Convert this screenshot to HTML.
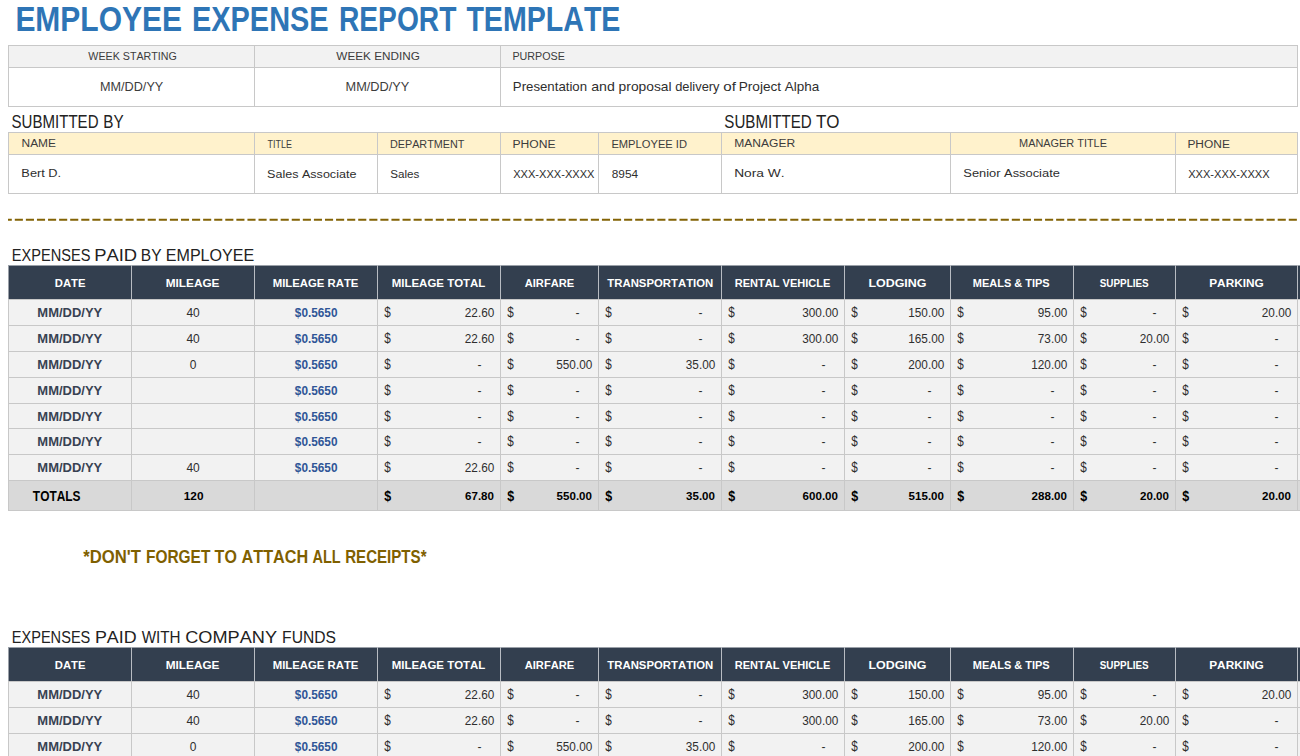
<!DOCTYPE html>
<html><head><meta charset="utf-8"><style>
html,body{margin:0;padding:0;background:#fff;}
body{width:1300px;height:756px;overflow:hidden;}
svg{display:block;font-family:"Liberation Sans",sans-serif;font-kerning:none;}
</style></head><body>
<svg width="1300" height="756" viewBox="0 0 1300 756">
<rect width="1300" height="756" fill="#fff"/>
<text x="15.39" y="31.2" font-size="34.4" font-weight="bold" fill="#2E75B6" textLength="166.58" lengthAdjust="spacingAndGlyphs">EMPLOYEE</text>
<text x="191.96" y="31.2" font-size="34.4" font-weight="bold" fill="#2E75B6" textLength="136.67" lengthAdjust="spacingAndGlyphs">EXPENSE</text>
<text x="338.91" y="31.2" font-size="34.4" font-weight="bold" fill="#2E75B6" textLength="117.49" lengthAdjust="spacingAndGlyphs">REPORT</text>
<text x="466.38" y="31.2" font-size="34.4" font-weight="bold" fill="#2E75B6" textLength="154.04" lengthAdjust="spacingAndGlyphs">TEMPLATE</text>
<rect x="8" y="45" width="1290" height="22" fill="#F2F2F2"/>
<rect x="8" y="45" width="1290" height="1" fill="#C8C8C8"/>
<rect x="8" y="67" width="1290" height="1" fill="#C8C8C8"/>
<rect x="8" y="106" width="1290" height="1" fill="#C8C8C8"/>
<rect x="8" y="45" width="1" height="62" fill="#C8C8C8"/>
<rect x="254" y="45" width="1" height="62" fill="#C8C8C8"/>
<rect x="500" y="45" width="1" height="62" fill="#C8C8C8"/>
<rect x="1297" y="45" width="1" height="62" fill="#C8C8C8"/>
<text x="88.35" y="60" font-size="11.7" fill="#3C3C3C" textLength="88.45" lengthAdjust="spacingAndGlyphs">WEEK STARTING</text>
<text x="336.35" y="60" font-size="11.7" fill="#3C3C3C" textLength="83.53" lengthAdjust="spacingAndGlyphs">WEEK ENDING</text>
<text x="512.42" y="60" font-size="11.7" fill="#3C3C3C" textLength="52.54" lengthAdjust="spacingAndGlyphs">PURPOSE</text>
<text x="99.96" y="91" font-size="12.1" fill="#3C3C3C" textLength="63.32" lengthAdjust="spacingAndGlyphs">MM/DD/YY</text>
<text x="345.55" y="91" font-size="12.1" fill="#3C3C3C" textLength="63.73" lengthAdjust="spacingAndGlyphs">MM/DD/YY</text>
<text x="512.82" y="90.5" font-size="11.9" fill="#2E2E2E" textLength="74.24" lengthAdjust="spacingAndGlyphs">Presentation</text>
<text x="591.20" y="90.5" font-size="11.9" fill="#2E2E2E" textLength="23.61" lengthAdjust="spacingAndGlyphs">and</text>
<text x="618.61" y="90.5" font-size="11.9" fill="#2E2E2E" textLength="53.02" lengthAdjust="spacingAndGlyphs">proposal</text>
<text x="675.16" y="90.5" font-size="11.9" fill="#2E2E2E" textLength="44.37" lengthAdjust="spacingAndGlyphs">delivery</text>
<text x="723.36" y="90.5" font-size="11.9" fill="#2E2E2E" textLength="12.61" lengthAdjust="spacingAndGlyphs">of</text>
<text x="738.68" y="90.5" font-size="11.9" fill="#2E2E2E" textLength="42.42" lengthAdjust="spacingAndGlyphs">Project</text>
<text x="784.87" y="90.5" font-size="11.9" fill="#2E2E2E" textLength="34.43" lengthAdjust="spacingAndGlyphs">Alpha</text>
<text x="11.52" y="128" font-size="17.5" fill="#222222" textLength="87.00" lengthAdjust="spacingAndGlyphs">SUBMITTED</text>
<text x="103.35" y="128" font-size="17.5" fill="#222222" textLength="20.39" lengthAdjust="spacingAndGlyphs">BY</text>
<text x="724.31" y="128" font-size="17.5" fill="#222222" textLength="87.41" lengthAdjust="spacingAndGlyphs">SUBMITTED</text>
<text x="815.92" y="128" font-size="17.5" fill="#222222" textLength="23.59" lengthAdjust="spacingAndGlyphs">TO</text>
<rect x="8" y="132" width="1290" height="22" fill="#FFF2CC"/>
<rect x="8" y="132" width="1290" height="1" fill="#C8C8C8"/>
<rect x="8" y="154" width="1290" height="1" fill="#C8C8C8"/>
<rect x="8" y="193" width="1290" height="1" fill="#C8C8C8"/>
<rect x="8" y="132" width="1" height="62" fill="#C8C8C8"/>
<rect x="254" y="132" width="1" height="62" fill="#C8C8C8"/>
<rect x="377" y="132" width="1" height="62" fill="#C8C8C8"/>
<rect x="500" y="132" width="1" height="62" fill="#C8C8C8"/>
<rect x="598" y="132" width="1" height="62" fill="#C8C8C8"/>
<rect x="721" y="132" width="1" height="62" fill="#C8C8C8"/>
<rect x="950" y="132" width="1" height="62" fill="#C8C8C8"/>
<rect x="1175" y="132" width="1" height="62" fill="#C8C8C8"/>
<rect x="1297" y="132" width="1" height="62" fill="#C8C8C8"/>
<text x="21.52" y="147" font-size="11.7" fill="#3C3C3C" textLength="34.49" lengthAdjust="spacingAndGlyphs">NAME</text>
<text x="267.60" y="147.8" font-size="11.7" fill="#3C3C3C" textLength="24.28" lengthAdjust="spacingAndGlyphs">TITLE</text>
<text x="389.91" y="147.5" font-size="11.7" fill="#3C3C3C" textLength="74.54" lengthAdjust="spacingAndGlyphs">DEPARTMENT</text>
<text x="512.41" y="147.5" font-size="11.7" fill="#3C3C3C" textLength="43.12" lengthAdjust="spacingAndGlyphs">PHONE</text>
<text x="611.38" y="147.5" font-size="11.7" fill="#3C3C3C" textLength="75.65" lengthAdjust="spacingAndGlyphs">EMPLOYEE ID</text>
<text x="734.31" y="146.9" font-size="11.7" fill="#3C3C3C" textLength="60.95" lengthAdjust="spacingAndGlyphs">MANAGER</text>
<text x="1019.11" y="146.9" font-size="11.7" fill="#3C3C3C" textLength="87.86" lengthAdjust="spacingAndGlyphs">MANAGER TITLE</text>
<text x="1187.42" y="147.8" font-size="11.7" fill="#3C3C3C" textLength="42.49" lengthAdjust="spacingAndGlyphs">PHONE</text>
<text x="21.35" y="177.2" font-size="11.7" fill="#2E2E2E" textLength="39.82" lengthAdjust="spacingAndGlyphs">Bert D.</text>
<text x="267.13" y="177.9" font-size="11.7" fill="#2E2E2E" textLength="89.23" lengthAdjust="spacingAndGlyphs">Sales Associate</text>
<text x="390.27" y="178.2" font-size="11.7" fill="#2E2E2E" textLength="29.15" lengthAdjust="spacingAndGlyphs">Sales</text>
<text x="513.15" y="178.2" font-size="11.5" fill="#2E2E2E" textLength="81.38" lengthAdjust="spacingAndGlyphs">XXX-XXX-XXXX</text>
<text x="611.79" y="178.2" font-size="11.7" fill="#2E2E2E" textLength="26.36" lengthAdjust="spacingAndGlyphs">8954</text>
<text x="734.17" y="177" font-size="11.7" fill="#2E2E2E" textLength="50.49" lengthAdjust="spacingAndGlyphs">Nora W.</text>
<text x="963.32" y="177" font-size="11.7" fill="#2E2E2E" textLength="96.56" lengthAdjust="spacingAndGlyphs">Senior Associate</text>
<text x="1188.15" y="178" font-size="11.5" fill="#2E2E2E" textLength="81.48" lengthAdjust="spacingAndGlyphs">XXX-XXX-XXXX</text>
<path d="M8 219.8H1297" stroke="#836305" stroke-width="2.1" stroke-dasharray="8.1 2.978" stroke-dashoffset="4.28"/>
<text x="11.80" y="261" font-size="17.2" fill="#222222" textLength="78.67" lengthAdjust="spacingAndGlyphs">EXPENSES</text>
<text x="94.19" y="261" font-size="17.2" fill="#222222" textLength="42.89" lengthAdjust="spacingAndGlyphs">PAID</text>
<text x="140.83" y="261" font-size="17.2" fill="#222222" textLength="20.72" lengthAdjust="spacingAndGlyphs">BY</text>
<text x="165.78" y="261" font-size="17.2" fill="#222222" textLength="88.51" lengthAdjust="spacingAndGlyphs">EMPLOYEE</text>
<rect x="8" y="265" width="1292" height="34" fill="#9AA0A8"/>
<rect x="9" y="266" width="1291" height="33" fill="#333F4F"/>
<text x="54.75" y="286.7" font-size="11.2" font-weight="bold" fill="#FFFFFF" textLength="30.69" lengthAdjust="spacingAndGlyphs">DATE</text>
<text x="165.71" y="286.7" font-size="11.2" font-weight="bold" fill="#FFFFFF" textLength="53.75" lengthAdjust="spacingAndGlyphs">MILEAGE</text>
<text x="272.74" y="286.7" font-size="11.2" font-weight="bold" fill="#FFFFFF" textLength="85.70" lengthAdjust="spacingAndGlyphs">MILEAGE RATE</text>
<text x="391.73" y="286.7" font-size="11.2" font-weight="bold" fill="#FFFFFF" textLength="93.62" lengthAdjust="spacingAndGlyphs">MILEAGE TOTAL</text>
<text x="524.72" y="286.7" font-size="11.2" font-weight="bold" fill="#FFFFFF" textLength="49.46" lengthAdjust="spacingAndGlyphs">AIRFARE</text>
<text x="607.37" y="286.7" font-size="11.2" font-weight="bold" fill="#FFFFFF" textLength="105.89" lengthAdjust="spacingAndGlyphs">TRANSPORTATION</text>
<text x="734.76" y="286.7" font-size="11.2" font-weight="bold" fill="#FFFFFF" textLength="95.67" lengthAdjust="spacingAndGlyphs">RENTAL VEHICLE</text>
<text x="868.42" y="286.7" font-size="11.2" font-weight="bold" fill="#FFFFFF" textLength="58.11" lengthAdjust="spacingAndGlyphs">LODGING</text>
<text x="972.76" y="286.7" font-size="11.2" font-weight="bold" fill="#FFFFFF" textLength="76.96" lengthAdjust="spacingAndGlyphs">MEALS &amp; TIPS</text>
<text x="1099.72" y="286.7" font-size="11.2" font-weight="bold" fill="#FFFFFF" textLength="48.92" lengthAdjust="spacingAndGlyphs">SUPPLIES</text>
<text x="1209.21" y="286.7" font-size="11.2" font-weight="bold" fill="#FFFFFF" textLength="54.52" lengthAdjust="spacingAndGlyphs">PARKING</text>
<rect x="131" y="265" width="1" height="34" fill="#B8BCC2"/>
<rect x="254" y="265" width="1" height="34" fill="#B8BCC2"/>
<rect x="377" y="265" width="1" height="34" fill="#B8BCC2"/>
<rect x="500" y="265" width="1" height="34" fill="#B8BCC2"/>
<rect x="598" y="265" width="1" height="34" fill="#B8BCC2"/>
<rect x="721" y="265" width="1" height="34" fill="#B8BCC2"/>
<rect x="844" y="265" width="1" height="34" fill="#B8BCC2"/>
<rect x="950" y="265" width="1" height="34" fill="#B8BCC2"/>
<rect x="1073" y="265" width="1" height="34" fill="#B8BCC2"/>
<rect x="1175" y="265" width="1" height="34" fill="#B8BCC2"/>
<rect x="1297" y="265" width="1" height="34" fill="#B8BCC2"/>
<rect x="8" y="299" width="1292" height="211" fill="#F2F2F2"/>
<rect x="8" y="481" width="1292" height="29" fill="#D9D9D9"/>
<rect x="8" y="299" width="1292" height="1" fill="#C8C8C8"/>
<rect x="8" y="325" width="1292" height="1" fill="#C8C8C8"/>
<rect x="8" y="351" width="1292" height="1" fill="#C8C8C8"/>
<rect x="8" y="377" width="1292" height="1" fill="#C8C8C8"/>
<rect x="8" y="403" width="1292" height="1" fill="#C8C8C8"/>
<rect x="8" y="428" width="1292" height="1" fill="#C8C8C8"/>
<rect x="8" y="454" width="1292" height="1" fill="#C8C8C8"/>
<rect x="8" y="480" width="1292" height="1" fill="#C8C8C8"/>
<rect x="8" y="510" width="1292" height="1" fill="#C8C8C8"/>
<rect x="8" y="299" width="1" height="212" fill="#C8C8C8"/>
<rect x="131" y="299" width="1" height="212" fill="#C8C8C8"/>
<rect x="254" y="299" width="1" height="212" fill="#C8C8C8"/>
<rect x="377" y="299" width="1" height="212" fill="#C8C8C8"/>
<rect x="500" y="299" width="1" height="212" fill="#C8C8C8"/>
<rect x="598" y="299" width="1" height="212" fill="#C8C8C8"/>
<rect x="721" y="299" width="1" height="212" fill="#C8C8C8"/>
<rect x="844" y="299" width="1" height="212" fill="#C8C8C8"/>
<rect x="950" y="299" width="1" height="212" fill="#C8C8C8"/>
<rect x="1073" y="299" width="1" height="212" fill="#C8C8C8"/>
<rect x="1175" y="299" width="1" height="212" fill="#C8C8C8"/>
<rect x="1297" y="299" width="1" height="212" fill="#C8C8C8"/>
<text x="37.33" y="316.7" font-size="11.9" font-weight="bold" fill="#384252" textLength="64.88" lengthAdjust="spacingAndGlyphs">MM/DD/YY</text>
<text x="186.42" y="316.7" font-size="12" fill="#2E2E2E" textLength="13.35" lengthAdjust="spacingAndGlyphs">40</text>
<text x="294.84" y="316.7" font-size="11.9" font-weight="bold" fill="#2F5597" textLength="42.64" lengthAdjust="spacingAndGlyphs">$0.5650</text>
<text x="384.27" y="317.3" font-size="14" fill="#2E2E2E" textLength="6.51" lengthAdjust="spacingAndGlyphs">$</text>
<text x="464.83" y="316.7" font-size="12" fill="#2E2E2E" textLength="29.43" lengthAdjust="spacingAndGlyphs">22.60</text>
<text x="507.27" y="317.3" font-size="14" fill="#2E2E2E" textLength="6.51" lengthAdjust="spacingAndGlyphs">$</text>
<text x="575.54" y="316.7" font-size="12" fill="#2E2E2E" textLength="4.00" lengthAdjust="spacingAndGlyphs">-</text>
<text x="605.27" y="317.3" font-size="14" fill="#2E2E2E" textLength="6.51" lengthAdjust="spacingAndGlyphs">$</text>
<text x="698.54" y="316.7" font-size="12" fill="#2E2E2E" textLength="4.00" lengthAdjust="spacingAndGlyphs">-</text>
<text x="728.27" y="317.3" font-size="14" fill="#2E2E2E" textLength="6.51" lengthAdjust="spacingAndGlyphs">$</text>
<text x="802.29" y="316.7" font-size="12" fill="#2E2E2E" textLength="35.97" lengthAdjust="spacingAndGlyphs">300.00</text>
<text x="851.27" y="317.3" font-size="14" fill="#2E2E2E" textLength="6.51" lengthAdjust="spacingAndGlyphs">$</text>
<text x="908.29" y="316.7" font-size="12" fill="#2E2E2E" textLength="35.97" lengthAdjust="spacingAndGlyphs">150.00</text>
<text x="957.27" y="317.3" font-size="14" fill="#2E2E2E" textLength="6.51" lengthAdjust="spacingAndGlyphs">$</text>
<text x="1037.83" y="316.7" font-size="12" fill="#2E2E2E" textLength="29.43" lengthAdjust="spacingAndGlyphs">95.00</text>
<text x="1080.27" y="317.3" font-size="14" fill="#2E2E2E" textLength="6.51" lengthAdjust="spacingAndGlyphs">$</text>
<text x="1152.54" y="316.7" font-size="12" fill="#2E2E2E" textLength="4.00" lengthAdjust="spacingAndGlyphs">-</text>
<text x="1182.27" y="317.3" font-size="14" fill="#2E2E2E" textLength="6.51" lengthAdjust="spacingAndGlyphs">$</text>
<text x="1261.83" y="316.7" font-size="12" fill="#2E2E2E" textLength="29.43" lengthAdjust="spacingAndGlyphs">20.00</text>
<text x="37.33" y="342.7" font-size="11.9" font-weight="bold" fill="#384252" textLength="64.88" lengthAdjust="spacingAndGlyphs">MM/DD/YY</text>
<text x="186.42" y="342.7" font-size="12" fill="#2E2E2E" textLength="13.35" lengthAdjust="spacingAndGlyphs">40</text>
<text x="294.84" y="342.7" font-size="11.9" font-weight="bold" fill="#2F5597" textLength="42.64" lengthAdjust="spacingAndGlyphs">$0.5650</text>
<text x="384.27" y="343.3" font-size="14" fill="#2E2E2E" textLength="6.51" lengthAdjust="spacingAndGlyphs">$</text>
<text x="464.83" y="342.7" font-size="12" fill="#2E2E2E" textLength="29.43" lengthAdjust="spacingAndGlyphs">22.60</text>
<text x="507.27" y="343.3" font-size="14" fill="#2E2E2E" textLength="6.51" lengthAdjust="spacingAndGlyphs">$</text>
<text x="575.54" y="342.7" font-size="12" fill="#2E2E2E" textLength="4.00" lengthAdjust="spacingAndGlyphs">-</text>
<text x="605.27" y="343.3" font-size="14" fill="#2E2E2E" textLength="6.51" lengthAdjust="spacingAndGlyphs">$</text>
<text x="698.54" y="342.7" font-size="12" fill="#2E2E2E" textLength="4.00" lengthAdjust="spacingAndGlyphs">-</text>
<text x="728.27" y="343.3" font-size="14" fill="#2E2E2E" textLength="6.51" lengthAdjust="spacingAndGlyphs">$</text>
<text x="802.29" y="342.7" font-size="12" fill="#2E2E2E" textLength="35.97" lengthAdjust="spacingAndGlyphs">300.00</text>
<text x="851.27" y="343.3" font-size="14" fill="#2E2E2E" textLength="6.51" lengthAdjust="spacingAndGlyphs">$</text>
<text x="908.29" y="342.7" font-size="12" fill="#2E2E2E" textLength="35.97" lengthAdjust="spacingAndGlyphs">165.00</text>
<text x="957.27" y="343.3" font-size="14" fill="#2E2E2E" textLength="6.51" lengthAdjust="spacingAndGlyphs">$</text>
<text x="1037.83" y="342.7" font-size="12" fill="#2E2E2E" textLength="29.43" lengthAdjust="spacingAndGlyphs">73.00</text>
<text x="1080.27" y="343.3" font-size="14" fill="#2E2E2E" textLength="6.51" lengthAdjust="spacingAndGlyphs">$</text>
<text x="1139.83" y="342.7" font-size="12" fill="#2E2E2E" textLength="29.43" lengthAdjust="spacingAndGlyphs">20.00</text>
<text x="1182.27" y="343.3" font-size="14" fill="#2E2E2E" textLength="6.51" lengthAdjust="spacingAndGlyphs">$</text>
<text x="1274.54" y="342.7" font-size="12" fill="#2E2E2E" textLength="4.00" lengthAdjust="spacingAndGlyphs">-</text>
<text x="37.33" y="368.7" font-size="11.9" font-weight="bold" fill="#384252" textLength="64.88" lengthAdjust="spacingAndGlyphs">MM/DD/YY</text>
<text x="189.66" y="368.7" font-size="12" fill="#2E2E2E" textLength="6.67" lengthAdjust="spacingAndGlyphs">0</text>
<text x="294.84" y="368.7" font-size="11.9" font-weight="bold" fill="#2F5597" textLength="42.64" lengthAdjust="spacingAndGlyphs">$0.5650</text>
<text x="384.27" y="369.3" font-size="14" fill="#2E2E2E" textLength="6.51" lengthAdjust="spacingAndGlyphs">$</text>
<text x="477.54" y="368.7" font-size="12" fill="#2E2E2E" textLength="4.00" lengthAdjust="spacingAndGlyphs">-</text>
<text x="507.27" y="369.3" font-size="14" fill="#2E2E2E" textLength="6.51" lengthAdjust="spacingAndGlyphs">$</text>
<text x="556.29" y="368.7" font-size="12" fill="#2E2E2E" textLength="35.97" lengthAdjust="spacingAndGlyphs">550.00</text>
<text x="605.27" y="369.3" font-size="14" fill="#2E2E2E" textLength="6.51" lengthAdjust="spacingAndGlyphs">$</text>
<text x="685.83" y="368.7" font-size="12" fill="#2E2E2E" textLength="29.43" lengthAdjust="spacingAndGlyphs">35.00</text>
<text x="728.27" y="369.3" font-size="14" fill="#2E2E2E" textLength="6.51" lengthAdjust="spacingAndGlyphs">$</text>
<text x="821.54" y="368.7" font-size="12" fill="#2E2E2E" textLength="4.00" lengthAdjust="spacingAndGlyphs">-</text>
<text x="851.27" y="369.3" font-size="14" fill="#2E2E2E" textLength="6.51" lengthAdjust="spacingAndGlyphs">$</text>
<text x="908.29" y="368.7" font-size="12" fill="#2E2E2E" textLength="35.97" lengthAdjust="spacingAndGlyphs">200.00</text>
<text x="957.27" y="369.3" font-size="14" fill="#2E2E2E" textLength="6.51" lengthAdjust="spacingAndGlyphs">$</text>
<text x="1031.29" y="368.7" font-size="12" fill="#2E2E2E" textLength="35.97" lengthAdjust="spacingAndGlyphs">120.00</text>
<text x="1080.27" y="369.3" font-size="14" fill="#2E2E2E" textLength="6.51" lengthAdjust="spacingAndGlyphs">$</text>
<text x="1152.54" y="368.7" font-size="12" fill="#2E2E2E" textLength="4.00" lengthAdjust="spacingAndGlyphs">-</text>
<text x="1182.27" y="369.3" font-size="14" fill="#2E2E2E" textLength="6.51" lengthAdjust="spacingAndGlyphs">$</text>
<text x="1274.54" y="368.7" font-size="12" fill="#2E2E2E" textLength="4.00" lengthAdjust="spacingAndGlyphs">-</text>
<text x="37.33" y="394.7" font-size="11.9" font-weight="bold" fill="#384252" textLength="64.88" lengthAdjust="spacingAndGlyphs">MM/DD/YY</text>
<text x="294.84" y="394.7" font-size="11.9" font-weight="bold" fill="#2F5597" textLength="42.64" lengthAdjust="spacingAndGlyphs">$0.5650</text>
<text x="384.27" y="395.3" font-size="14" fill="#2E2E2E" textLength="6.51" lengthAdjust="spacingAndGlyphs">$</text>
<text x="477.54" y="394.7" font-size="12" fill="#2E2E2E" textLength="4.00" lengthAdjust="spacingAndGlyphs">-</text>
<text x="507.27" y="395.3" font-size="14" fill="#2E2E2E" textLength="6.51" lengthAdjust="spacingAndGlyphs">$</text>
<text x="575.54" y="394.7" font-size="12" fill="#2E2E2E" textLength="4.00" lengthAdjust="spacingAndGlyphs">-</text>
<text x="605.27" y="395.3" font-size="14" fill="#2E2E2E" textLength="6.51" lengthAdjust="spacingAndGlyphs">$</text>
<text x="698.54" y="394.7" font-size="12" fill="#2E2E2E" textLength="4.00" lengthAdjust="spacingAndGlyphs">-</text>
<text x="728.27" y="395.3" font-size="14" fill="#2E2E2E" textLength="6.51" lengthAdjust="spacingAndGlyphs">$</text>
<text x="821.54" y="394.7" font-size="12" fill="#2E2E2E" textLength="4.00" lengthAdjust="spacingAndGlyphs">-</text>
<text x="851.27" y="395.3" font-size="14" fill="#2E2E2E" textLength="6.51" lengthAdjust="spacingAndGlyphs">$</text>
<text x="927.54" y="394.7" font-size="12" fill="#2E2E2E" textLength="4.00" lengthAdjust="spacingAndGlyphs">-</text>
<text x="957.27" y="395.3" font-size="14" fill="#2E2E2E" textLength="6.51" lengthAdjust="spacingAndGlyphs">$</text>
<text x="1050.54" y="394.7" font-size="12" fill="#2E2E2E" textLength="4.00" lengthAdjust="spacingAndGlyphs">-</text>
<text x="1080.27" y="395.3" font-size="14" fill="#2E2E2E" textLength="6.51" lengthAdjust="spacingAndGlyphs">$</text>
<text x="1152.54" y="394.7" font-size="12" fill="#2E2E2E" textLength="4.00" lengthAdjust="spacingAndGlyphs">-</text>
<text x="1182.27" y="395.3" font-size="14" fill="#2E2E2E" textLength="6.51" lengthAdjust="spacingAndGlyphs">$</text>
<text x="1274.54" y="394.7" font-size="12" fill="#2E2E2E" textLength="4.00" lengthAdjust="spacingAndGlyphs">-</text>
<text x="37.33" y="420.7" font-size="11.9" font-weight="bold" fill="#384252" textLength="64.88" lengthAdjust="spacingAndGlyphs">MM/DD/YY</text>
<text x="294.84" y="420.7" font-size="11.9" font-weight="bold" fill="#2F5597" textLength="42.64" lengthAdjust="spacingAndGlyphs">$0.5650</text>
<text x="384.27" y="421.3" font-size="14" fill="#2E2E2E" textLength="6.51" lengthAdjust="spacingAndGlyphs">$</text>
<text x="477.54" y="420.7" font-size="12" fill="#2E2E2E" textLength="4.00" lengthAdjust="spacingAndGlyphs">-</text>
<text x="507.27" y="421.3" font-size="14" fill="#2E2E2E" textLength="6.51" lengthAdjust="spacingAndGlyphs">$</text>
<text x="575.54" y="420.7" font-size="12" fill="#2E2E2E" textLength="4.00" lengthAdjust="spacingAndGlyphs">-</text>
<text x="605.27" y="421.3" font-size="14" fill="#2E2E2E" textLength="6.51" lengthAdjust="spacingAndGlyphs">$</text>
<text x="698.54" y="420.7" font-size="12" fill="#2E2E2E" textLength="4.00" lengthAdjust="spacingAndGlyphs">-</text>
<text x="728.27" y="421.3" font-size="14" fill="#2E2E2E" textLength="6.51" lengthAdjust="spacingAndGlyphs">$</text>
<text x="821.54" y="420.7" font-size="12" fill="#2E2E2E" textLength="4.00" lengthAdjust="spacingAndGlyphs">-</text>
<text x="851.27" y="421.3" font-size="14" fill="#2E2E2E" textLength="6.51" lengthAdjust="spacingAndGlyphs">$</text>
<text x="927.54" y="420.7" font-size="12" fill="#2E2E2E" textLength="4.00" lengthAdjust="spacingAndGlyphs">-</text>
<text x="957.27" y="421.3" font-size="14" fill="#2E2E2E" textLength="6.51" lengthAdjust="spacingAndGlyphs">$</text>
<text x="1050.54" y="420.7" font-size="12" fill="#2E2E2E" textLength="4.00" lengthAdjust="spacingAndGlyphs">-</text>
<text x="1080.27" y="421.3" font-size="14" fill="#2E2E2E" textLength="6.51" lengthAdjust="spacingAndGlyphs">$</text>
<text x="1152.54" y="420.7" font-size="12" fill="#2E2E2E" textLength="4.00" lengthAdjust="spacingAndGlyphs">-</text>
<text x="1182.27" y="421.3" font-size="14" fill="#2E2E2E" textLength="6.51" lengthAdjust="spacingAndGlyphs">$</text>
<text x="1274.54" y="420.7" font-size="12" fill="#2E2E2E" textLength="4.00" lengthAdjust="spacingAndGlyphs">-</text>
<text x="37.33" y="445.7" font-size="11.9" font-weight="bold" fill="#384252" textLength="64.88" lengthAdjust="spacingAndGlyphs">MM/DD/YY</text>
<text x="294.84" y="445.7" font-size="11.9" font-weight="bold" fill="#2F5597" textLength="42.64" lengthAdjust="spacingAndGlyphs">$0.5650</text>
<text x="384.27" y="446.3" font-size="14" fill="#2E2E2E" textLength="6.51" lengthAdjust="spacingAndGlyphs">$</text>
<text x="477.54" y="445.7" font-size="12" fill="#2E2E2E" textLength="4.00" lengthAdjust="spacingAndGlyphs">-</text>
<text x="507.27" y="446.3" font-size="14" fill="#2E2E2E" textLength="6.51" lengthAdjust="spacingAndGlyphs">$</text>
<text x="575.54" y="445.7" font-size="12" fill="#2E2E2E" textLength="4.00" lengthAdjust="spacingAndGlyphs">-</text>
<text x="605.27" y="446.3" font-size="14" fill="#2E2E2E" textLength="6.51" lengthAdjust="spacingAndGlyphs">$</text>
<text x="698.54" y="445.7" font-size="12" fill="#2E2E2E" textLength="4.00" lengthAdjust="spacingAndGlyphs">-</text>
<text x="728.27" y="446.3" font-size="14" fill="#2E2E2E" textLength="6.51" lengthAdjust="spacingAndGlyphs">$</text>
<text x="821.54" y="445.7" font-size="12" fill="#2E2E2E" textLength="4.00" lengthAdjust="spacingAndGlyphs">-</text>
<text x="851.27" y="446.3" font-size="14" fill="#2E2E2E" textLength="6.51" lengthAdjust="spacingAndGlyphs">$</text>
<text x="927.54" y="445.7" font-size="12" fill="#2E2E2E" textLength="4.00" lengthAdjust="spacingAndGlyphs">-</text>
<text x="957.27" y="446.3" font-size="14" fill="#2E2E2E" textLength="6.51" lengthAdjust="spacingAndGlyphs">$</text>
<text x="1050.54" y="445.7" font-size="12" fill="#2E2E2E" textLength="4.00" lengthAdjust="spacingAndGlyphs">-</text>
<text x="1080.27" y="446.3" font-size="14" fill="#2E2E2E" textLength="6.51" lengthAdjust="spacingAndGlyphs">$</text>
<text x="1152.54" y="445.7" font-size="12" fill="#2E2E2E" textLength="4.00" lengthAdjust="spacingAndGlyphs">-</text>
<text x="1182.27" y="446.3" font-size="14" fill="#2E2E2E" textLength="6.51" lengthAdjust="spacingAndGlyphs">$</text>
<text x="1274.54" y="445.7" font-size="12" fill="#2E2E2E" textLength="4.00" lengthAdjust="spacingAndGlyphs">-</text>
<text x="37.33" y="471.7" font-size="11.9" font-weight="bold" fill="#384252" textLength="64.88" lengthAdjust="spacingAndGlyphs">MM/DD/YY</text>
<text x="186.42" y="471.7" font-size="12" fill="#2E2E2E" textLength="13.35" lengthAdjust="spacingAndGlyphs">40</text>
<text x="294.84" y="471.7" font-size="11.9" font-weight="bold" fill="#2F5597" textLength="42.64" lengthAdjust="spacingAndGlyphs">$0.5650</text>
<text x="384.27" y="472.3" font-size="14" fill="#2E2E2E" textLength="6.51" lengthAdjust="spacingAndGlyphs">$</text>
<text x="464.83" y="471.7" font-size="12" fill="#2E2E2E" textLength="29.43" lengthAdjust="spacingAndGlyphs">22.60</text>
<text x="507.27" y="472.3" font-size="14" fill="#2E2E2E" textLength="6.51" lengthAdjust="spacingAndGlyphs">$</text>
<text x="575.54" y="471.7" font-size="12" fill="#2E2E2E" textLength="4.00" lengthAdjust="spacingAndGlyphs">-</text>
<text x="605.27" y="472.3" font-size="14" fill="#2E2E2E" textLength="6.51" lengthAdjust="spacingAndGlyphs">$</text>
<text x="698.54" y="471.7" font-size="12" fill="#2E2E2E" textLength="4.00" lengthAdjust="spacingAndGlyphs">-</text>
<text x="728.27" y="472.3" font-size="14" fill="#2E2E2E" textLength="6.51" lengthAdjust="spacingAndGlyphs">$</text>
<text x="821.54" y="471.7" font-size="12" fill="#2E2E2E" textLength="4.00" lengthAdjust="spacingAndGlyphs">-</text>
<text x="851.27" y="472.3" font-size="14" fill="#2E2E2E" textLength="6.51" lengthAdjust="spacingAndGlyphs">$</text>
<text x="927.54" y="471.7" font-size="12" fill="#2E2E2E" textLength="4.00" lengthAdjust="spacingAndGlyphs">-</text>
<text x="957.27" y="472.3" font-size="14" fill="#2E2E2E" textLength="6.51" lengthAdjust="spacingAndGlyphs">$</text>
<text x="1050.54" y="471.7" font-size="12" fill="#2E2E2E" textLength="4.00" lengthAdjust="spacingAndGlyphs">-</text>
<text x="1080.27" y="472.3" font-size="14" fill="#2E2E2E" textLength="6.51" lengthAdjust="spacingAndGlyphs">$</text>
<text x="1152.54" y="471.7" font-size="12" fill="#2E2E2E" textLength="4.00" lengthAdjust="spacingAndGlyphs">-</text>
<text x="1182.27" y="472.3" font-size="14" fill="#2E2E2E" textLength="6.51" lengthAdjust="spacingAndGlyphs">$</text>
<text x="1274.54" y="471.7" font-size="12" fill="#2E2E2E" textLength="4.00" lengthAdjust="spacingAndGlyphs">-</text>
<text x="32.87" y="501.09999999999997" font-size="14.5" font-weight="bold" fill="#000" textLength="47.60" lengthAdjust="spacingAndGlyphs">TOTALS</text>
<text x="183.76" y="499.9" font-size="11.8" font-weight="bold" fill="#000" textLength="19.73" lengthAdjust="spacingAndGlyphs">120</text>
<text x="384.24" y="500.5" font-size="14" font-weight="bold" fill="#000" textLength="6.94" lengthAdjust="spacingAndGlyphs">$</text>
<text x="465.04" y="499.9" font-size="11.8" font-weight="bold" fill="#000" textLength="28.94" lengthAdjust="spacingAndGlyphs">67.80</text>
<text x="507.24" y="500.5" font-size="14" font-weight="bold" fill="#000" textLength="6.94" lengthAdjust="spacingAndGlyphs">$</text>
<text x="556.60" y="499.9" font-size="11.8" font-weight="bold" fill="#000" textLength="35.37" lengthAdjust="spacingAndGlyphs">550.00</text>
<text x="605.24" y="500.5" font-size="14" font-weight="bold" fill="#000" textLength="6.94" lengthAdjust="spacingAndGlyphs">$</text>
<text x="686.04" y="499.9" font-size="11.8" font-weight="bold" fill="#000" textLength="28.94" lengthAdjust="spacingAndGlyphs">35.00</text>
<text x="728.24" y="500.5" font-size="14" font-weight="bold" fill="#000" textLength="6.94" lengthAdjust="spacingAndGlyphs">$</text>
<text x="802.60" y="499.9" font-size="11.8" font-weight="bold" fill="#000" textLength="35.37" lengthAdjust="spacingAndGlyphs">600.00</text>
<text x="851.24" y="500.5" font-size="14" font-weight="bold" fill="#000" textLength="6.94" lengthAdjust="spacingAndGlyphs">$</text>
<text x="908.60" y="499.9" font-size="11.8" font-weight="bold" fill="#000" textLength="35.37" lengthAdjust="spacingAndGlyphs">515.00</text>
<text x="957.24" y="500.5" font-size="14" font-weight="bold" fill="#000" textLength="6.94" lengthAdjust="spacingAndGlyphs">$</text>
<text x="1031.60" y="499.9" font-size="11.8" font-weight="bold" fill="#000" textLength="35.37" lengthAdjust="spacingAndGlyphs">288.00</text>
<text x="1080.24" y="500.5" font-size="14" font-weight="bold" fill="#000" textLength="6.94" lengthAdjust="spacingAndGlyphs">$</text>
<text x="1140.04" y="499.9" font-size="11.8" font-weight="bold" fill="#000" textLength="28.94" lengthAdjust="spacingAndGlyphs">20.00</text>
<text x="1182.24" y="500.5" font-size="14" font-weight="bold" fill="#000" textLength="6.94" lengthAdjust="spacingAndGlyphs">$</text>
<text x="1262.04" y="499.9" font-size="11.8" font-weight="bold" fill="#000" textLength="28.94" lengthAdjust="spacingAndGlyphs">20.00</text>
<text x="83.25" y="562.7" font-size="17.5" font-weight="bold" fill="#7F6000" textLength="57.73" lengthAdjust="spacingAndGlyphs">*DON'T</text>
<text x="145.97" y="562.7" font-size="17.5" font-weight="bold" fill="#7F6000" textLength="64.40" lengthAdjust="spacingAndGlyphs">FORGET</text>
<text x="214.62" y="562.7" font-size="17.5" font-weight="bold" fill="#7F6000" textLength="22.25" lengthAdjust="spacingAndGlyphs">TO</text>
<text x="241.50" y="562.7" font-size="17.5" font-weight="bold" fill="#7F6000" textLength="66.70" lengthAdjust="spacingAndGlyphs">ATTACH</text>
<text x="312.54" y="562.7" font-size="17.5" font-weight="bold" fill="#7F6000" textLength="28.10" lengthAdjust="spacingAndGlyphs">ALL</text>
<text x="345.19" y="562.7" font-size="17.5" font-weight="bold" fill="#7F6000" textLength="81.32" lengthAdjust="spacingAndGlyphs">RECEIPTS*</text>
<text x="11.70" y="643.1" font-size="17.2" fill="#222222" textLength="78.67" lengthAdjust="spacingAndGlyphs">EXPENSES</text>
<text x="94.93" y="643.1" font-size="17.2" fill="#222222" textLength="41.72" lengthAdjust="spacingAndGlyphs">PAID</text>
<text x="141.63" y="643.1" font-size="17.2" fill="#222222" textLength="38.91" lengthAdjust="spacingAndGlyphs">WITH</text>
<text x="185.28" y="643.1" font-size="17.2" fill="#222222" textLength="91.72" lengthAdjust="spacingAndGlyphs">COMPANY</text>
<text x="282.12" y="643.1" font-size="17.2" fill="#222222" textLength="53.90" lengthAdjust="spacingAndGlyphs">FUNDS</text>
<rect x="8" y="647" width="1292" height="34" fill="#9AA0A8"/>
<rect x="9" y="648" width="1291" height="33" fill="#333F4F"/>
<text x="54.75" y="669.2" font-size="11.2" font-weight="bold" fill="#FFFFFF" textLength="30.69" lengthAdjust="spacingAndGlyphs">DATE</text>
<text x="165.71" y="669.2" font-size="11.2" font-weight="bold" fill="#FFFFFF" textLength="53.75" lengthAdjust="spacingAndGlyphs">MILEAGE</text>
<text x="272.74" y="669.2" font-size="11.2" font-weight="bold" fill="#FFFFFF" textLength="85.70" lengthAdjust="spacingAndGlyphs">MILEAGE RATE</text>
<text x="391.73" y="669.2" font-size="11.2" font-weight="bold" fill="#FFFFFF" textLength="93.62" lengthAdjust="spacingAndGlyphs">MILEAGE TOTAL</text>
<text x="524.72" y="669.2" font-size="11.2" font-weight="bold" fill="#FFFFFF" textLength="49.46" lengthAdjust="spacingAndGlyphs">AIRFARE</text>
<text x="607.37" y="669.2" font-size="11.2" font-weight="bold" fill="#FFFFFF" textLength="105.89" lengthAdjust="spacingAndGlyphs">TRANSPORTATION</text>
<text x="734.76" y="669.2" font-size="11.2" font-weight="bold" fill="#FFFFFF" textLength="95.67" lengthAdjust="spacingAndGlyphs">RENTAL VEHICLE</text>
<text x="868.42" y="669.2" font-size="11.2" font-weight="bold" fill="#FFFFFF" textLength="58.11" lengthAdjust="spacingAndGlyphs">LODGING</text>
<text x="972.76" y="669.2" font-size="11.2" font-weight="bold" fill="#FFFFFF" textLength="76.96" lengthAdjust="spacingAndGlyphs">MEALS &amp; TIPS</text>
<text x="1099.72" y="669.2" font-size="11.2" font-weight="bold" fill="#FFFFFF" textLength="48.92" lengthAdjust="spacingAndGlyphs">SUPPLIES</text>
<text x="1209.21" y="669.2" font-size="11.2" font-weight="bold" fill="#FFFFFF" textLength="54.52" lengthAdjust="spacingAndGlyphs">PARKING</text>
<rect x="131" y="647" width="1" height="34" fill="#B8BCC2"/>
<rect x="254" y="647" width="1" height="34" fill="#B8BCC2"/>
<rect x="377" y="647" width="1" height="34" fill="#B8BCC2"/>
<rect x="500" y="647" width="1" height="34" fill="#B8BCC2"/>
<rect x="598" y="647" width="1" height="34" fill="#B8BCC2"/>
<rect x="721" y="647" width="1" height="34" fill="#B8BCC2"/>
<rect x="844" y="647" width="1" height="34" fill="#B8BCC2"/>
<rect x="950" y="647" width="1" height="34" fill="#B8BCC2"/>
<rect x="1073" y="647" width="1" height="34" fill="#B8BCC2"/>
<rect x="1175" y="647" width="1" height="34" fill="#B8BCC2"/>
<rect x="1297" y="647" width="1" height="34" fill="#B8BCC2"/>
<rect x="8" y="681" width="1292" height="104" fill="#F2F2F2"/>
<rect x="8" y="681" width="1292" height="1" fill="#C8C8C8"/>
<rect x="8" y="707" width="1292" height="1" fill="#C8C8C8"/>
<rect x="8" y="733" width="1292" height="1" fill="#C8C8C8"/>
<rect x="8" y="759" width="1292" height="1" fill="#C8C8C8"/>
<rect x="8" y="785" width="1292" height="1" fill="#C8C8C8"/>
<rect x="8" y="681" width="1" height="105" fill="#C8C8C8"/>
<rect x="131" y="681" width="1" height="105" fill="#C8C8C8"/>
<rect x="254" y="681" width="1" height="105" fill="#C8C8C8"/>
<rect x="377" y="681" width="1" height="105" fill="#C8C8C8"/>
<rect x="500" y="681" width="1" height="105" fill="#C8C8C8"/>
<rect x="598" y="681" width="1" height="105" fill="#C8C8C8"/>
<rect x="721" y="681" width="1" height="105" fill="#C8C8C8"/>
<rect x="844" y="681" width="1" height="105" fill="#C8C8C8"/>
<rect x="950" y="681" width="1" height="105" fill="#C8C8C8"/>
<rect x="1073" y="681" width="1" height="105" fill="#C8C8C8"/>
<rect x="1175" y="681" width="1" height="105" fill="#C8C8C8"/>
<rect x="1297" y="681" width="1" height="105" fill="#C8C8C8"/>
<text x="37.33" y="698.7" font-size="11.9" font-weight="bold" fill="#384252" textLength="64.88" lengthAdjust="spacingAndGlyphs">MM/DD/YY</text>
<text x="186.42" y="698.7" font-size="12" fill="#2E2E2E" textLength="13.35" lengthAdjust="spacingAndGlyphs">40</text>
<text x="294.84" y="698.7" font-size="11.9" font-weight="bold" fill="#2F5597" textLength="42.64" lengthAdjust="spacingAndGlyphs">$0.5650</text>
<text x="384.27" y="699.3000000000001" font-size="14" fill="#2E2E2E" textLength="6.51" lengthAdjust="spacingAndGlyphs">$</text>
<text x="464.83" y="698.7" font-size="12" fill="#2E2E2E" textLength="29.43" lengthAdjust="spacingAndGlyphs">22.60</text>
<text x="507.27" y="699.3000000000001" font-size="14" fill="#2E2E2E" textLength="6.51" lengthAdjust="spacingAndGlyphs">$</text>
<text x="575.54" y="698.7" font-size="12" fill="#2E2E2E" textLength="4.00" lengthAdjust="spacingAndGlyphs">-</text>
<text x="605.27" y="699.3000000000001" font-size="14" fill="#2E2E2E" textLength="6.51" lengthAdjust="spacingAndGlyphs">$</text>
<text x="698.54" y="698.7" font-size="12" fill="#2E2E2E" textLength="4.00" lengthAdjust="spacingAndGlyphs">-</text>
<text x="728.27" y="699.3000000000001" font-size="14" fill="#2E2E2E" textLength="6.51" lengthAdjust="spacingAndGlyphs">$</text>
<text x="802.29" y="698.7" font-size="12" fill="#2E2E2E" textLength="35.97" lengthAdjust="spacingAndGlyphs">300.00</text>
<text x="851.27" y="699.3000000000001" font-size="14" fill="#2E2E2E" textLength="6.51" lengthAdjust="spacingAndGlyphs">$</text>
<text x="908.29" y="698.7" font-size="12" fill="#2E2E2E" textLength="35.97" lengthAdjust="spacingAndGlyphs">150.00</text>
<text x="957.27" y="699.3000000000001" font-size="14" fill="#2E2E2E" textLength="6.51" lengthAdjust="spacingAndGlyphs">$</text>
<text x="1037.83" y="698.7" font-size="12" fill="#2E2E2E" textLength="29.43" lengthAdjust="spacingAndGlyphs">95.00</text>
<text x="1080.27" y="699.3000000000001" font-size="14" fill="#2E2E2E" textLength="6.51" lengthAdjust="spacingAndGlyphs">$</text>
<text x="1152.54" y="698.7" font-size="12" fill="#2E2E2E" textLength="4.00" lengthAdjust="spacingAndGlyphs">-</text>
<text x="1182.27" y="699.3000000000001" font-size="14" fill="#2E2E2E" textLength="6.51" lengthAdjust="spacingAndGlyphs">$</text>
<text x="1261.83" y="698.7" font-size="12" fill="#2E2E2E" textLength="29.43" lengthAdjust="spacingAndGlyphs">20.00</text>
<text x="37.33" y="724.7" font-size="11.9" font-weight="bold" fill="#384252" textLength="64.88" lengthAdjust="spacingAndGlyphs">MM/DD/YY</text>
<text x="186.42" y="724.7" font-size="12" fill="#2E2E2E" textLength="13.35" lengthAdjust="spacingAndGlyphs">40</text>
<text x="294.84" y="724.7" font-size="11.9" font-weight="bold" fill="#2F5597" textLength="42.64" lengthAdjust="spacingAndGlyphs">$0.5650</text>
<text x="384.27" y="725.3000000000001" font-size="14" fill="#2E2E2E" textLength="6.51" lengthAdjust="spacingAndGlyphs">$</text>
<text x="464.83" y="724.7" font-size="12" fill="#2E2E2E" textLength="29.43" lengthAdjust="spacingAndGlyphs">22.60</text>
<text x="507.27" y="725.3000000000001" font-size="14" fill="#2E2E2E" textLength="6.51" lengthAdjust="spacingAndGlyphs">$</text>
<text x="575.54" y="724.7" font-size="12" fill="#2E2E2E" textLength="4.00" lengthAdjust="spacingAndGlyphs">-</text>
<text x="605.27" y="725.3000000000001" font-size="14" fill="#2E2E2E" textLength="6.51" lengthAdjust="spacingAndGlyphs">$</text>
<text x="698.54" y="724.7" font-size="12" fill="#2E2E2E" textLength="4.00" lengthAdjust="spacingAndGlyphs">-</text>
<text x="728.27" y="725.3000000000001" font-size="14" fill="#2E2E2E" textLength="6.51" lengthAdjust="spacingAndGlyphs">$</text>
<text x="802.29" y="724.7" font-size="12" fill="#2E2E2E" textLength="35.97" lengthAdjust="spacingAndGlyphs">300.00</text>
<text x="851.27" y="725.3000000000001" font-size="14" fill="#2E2E2E" textLength="6.51" lengthAdjust="spacingAndGlyphs">$</text>
<text x="908.29" y="724.7" font-size="12" fill="#2E2E2E" textLength="35.97" lengthAdjust="spacingAndGlyphs">165.00</text>
<text x="957.27" y="725.3000000000001" font-size="14" fill="#2E2E2E" textLength="6.51" lengthAdjust="spacingAndGlyphs">$</text>
<text x="1037.83" y="724.7" font-size="12" fill="#2E2E2E" textLength="29.43" lengthAdjust="spacingAndGlyphs">73.00</text>
<text x="1080.27" y="725.3000000000001" font-size="14" fill="#2E2E2E" textLength="6.51" lengthAdjust="spacingAndGlyphs">$</text>
<text x="1139.83" y="724.7" font-size="12" fill="#2E2E2E" textLength="29.43" lengthAdjust="spacingAndGlyphs">20.00</text>
<text x="1182.27" y="725.3000000000001" font-size="14" fill="#2E2E2E" textLength="6.51" lengthAdjust="spacingAndGlyphs">$</text>
<text x="1274.54" y="724.7" font-size="12" fill="#2E2E2E" textLength="4.00" lengthAdjust="spacingAndGlyphs">-</text>
<text x="37.33" y="750.7" font-size="11.9" font-weight="bold" fill="#384252" textLength="64.88" lengthAdjust="spacingAndGlyphs">MM/DD/YY</text>
<text x="189.66" y="750.7" font-size="12" fill="#2E2E2E" textLength="6.67" lengthAdjust="spacingAndGlyphs">0</text>
<text x="294.84" y="750.7" font-size="11.9" font-weight="bold" fill="#2F5597" textLength="42.64" lengthAdjust="spacingAndGlyphs">$0.5650</text>
<text x="384.27" y="751.3000000000001" font-size="14" fill="#2E2E2E" textLength="6.51" lengthAdjust="spacingAndGlyphs">$</text>
<text x="477.54" y="750.7" font-size="12" fill="#2E2E2E" textLength="4.00" lengthAdjust="spacingAndGlyphs">-</text>
<text x="507.27" y="751.3000000000001" font-size="14" fill="#2E2E2E" textLength="6.51" lengthAdjust="spacingAndGlyphs">$</text>
<text x="556.29" y="750.7" font-size="12" fill="#2E2E2E" textLength="35.97" lengthAdjust="spacingAndGlyphs">550.00</text>
<text x="605.27" y="751.3000000000001" font-size="14" fill="#2E2E2E" textLength="6.51" lengthAdjust="spacingAndGlyphs">$</text>
<text x="685.83" y="750.7" font-size="12" fill="#2E2E2E" textLength="29.43" lengthAdjust="spacingAndGlyphs">35.00</text>
<text x="728.27" y="751.3000000000001" font-size="14" fill="#2E2E2E" textLength="6.51" lengthAdjust="spacingAndGlyphs">$</text>
<text x="821.54" y="750.7" font-size="12" fill="#2E2E2E" textLength="4.00" lengthAdjust="spacingAndGlyphs">-</text>
<text x="851.27" y="751.3000000000001" font-size="14" fill="#2E2E2E" textLength="6.51" lengthAdjust="spacingAndGlyphs">$</text>
<text x="908.29" y="750.7" font-size="12" fill="#2E2E2E" textLength="35.97" lengthAdjust="spacingAndGlyphs">200.00</text>
<text x="957.27" y="751.3000000000001" font-size="14" fill="#2E2E2E" textLength="6.51" lengthAdjust="spacingAndGlyphs">$</text>
<text x="1031.29" y="750.7" font-size="12" fill="#2E2E2E" textLength="35.97" lengthAdjust="spacingAndGlyphs">120.00</text>
<text x="1080.27" y="751.3000000000001" font-size="14" fill="#2E2E2E" textLength="6.51" lengthAdjust="spacingAndGlyphs">$</text>
<text x="1152.54" y="750.7" font-size="12" fill="#2E2E2E" textLength="4.00" lengthAdjust="spacingAndGlyphs">-</text>
<text x="1182.27" y="751.3000000000001" font-size="14" fill="#2E2E2E" textLength="6.51" lengthAdjust="spacingAndGlyphs">$</text>
<text x="1274.54" y="750.7" font-size="12" fill="#2E2E2E" textLength="4.00" lengthAdjust="spacingAndGlyphs">-</text>
<text x="37.33" y="776.7" font-size="11.9" font-weight="bold" fill="#384252" textLength="64.88" lengthAdjust="spacingAndGlyphs">MM/DD/YY</text>
<text x="294.84" y="776.7" font-size="11.9" font-weight="bold" fill="#2F5597" textLength="42.64" lengthAdjust="spacingAndGlyphs">$0.5650</text>
<text x="384.27" y="777.3000000000001" font-size="14" fill="#2E2E2E" textLength="6.51" lengthAdjust="spacingAndGlyphs">$</text>
<text x="477.54" y="776.7" font-size="12" fill="#2E2E2E" textLength="4.00" lengthAdjust="spacingAndGlyphs">-</text>
<text x="507.27" y="777.3000000000001" font-size="14" fill="#2E2E2E" textLength="6.51" lengthAdjust="spacingAndGlyphs">$</text>
<text x="575.54" y="776.7" font-size="12" fill="#2E2E2E" textLength="4.00" lengthAdjust="spacingAndGlyphs">-</text>
<text x="605.27" y="777.3000000000001" font-size="14" fill="#2E2E2E" textLength="6.51" lengthAdjust="spacingAndGlyphs">$</text>
<text x="698.54" y="776.7" font-size="12" fill="#2E2E2E" textLength="4.00" lengthAdjust="spacingAndGlyphs">-</text>
<text x="728.27" y="777.3000000000001" font-size="14" fill="#2E2E2E" textLength="6.51" lengthAdjust="spacingAndGlyphs">$</text>
<text x="821.54" y="776.7" font-size="12" fill="#2E2E2E" textLength="4.00" lengthAdjust="spacingAndGlyphs">-</text>
<text x="851.27" y="777.3000000000001" font-size="14" fill="#2E2E2E" textLength="6.51" lengthAdjust="spacingAndGlyphs">$</text>
<text x="927.54" y="776.7" font-size="12" fill="#2E2E2E" textLength="4.00" lengthAdjust="spacingAndGlyphs">-</text>
<text x="957.27" y="777.3000000000001" font-size="14" fill="#2E2E2E" textLength="6.51" lengthAdjust="spacingAndGlyphs">$</text>
<text x="1050.54" y="776.7" font-size="12" fill="#2E2E2E" textLength="4.00" lengthAdjust="spacingAndGlyphs">-</text>
<text x="1080.27" y="777.3000000000001" font-size="14" fill="#2E2E2E" textLength="6.51" lengthAdjust="spacingAndGlyphs">$</text>
<text x="1152.54" y="776.7" font-size="12" fill="#2E2E2E" textLength="4.00" lengthAdjust="spacingAndGlyphs">-</text>
<text x="1182.27" y="777.3000000000001" font-size="14" fill="#2E2E2E" textLength="6.51" lengthAdjust="spacingAndGlyphs">$</text>
<text x="1274.54" y="776.7" font-size="12" fill="#2E2E2E" textLength="4.00" lengthAdjust="spacingAndGlyphs">-</text>
</svg>
</body></html>
